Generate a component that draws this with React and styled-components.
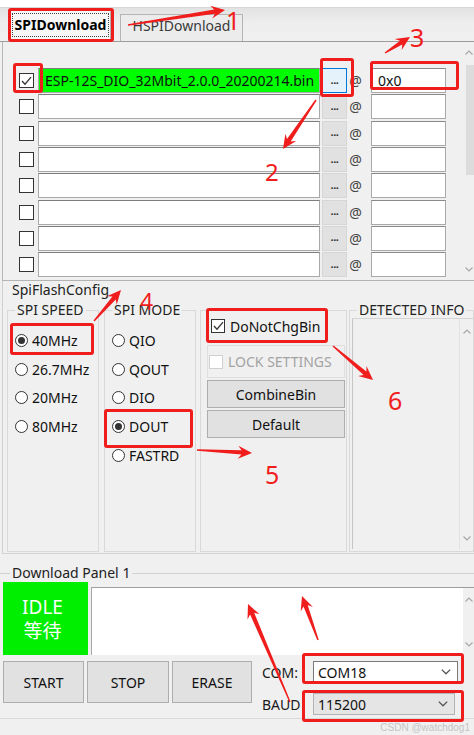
import React from 'react';
import styled, { createGlobalStyle, css } from 'styled-components';

const GlobalStyle = createGlobalStyle`
  html, body { margin: 0; padding: 0; background: #f0f0f0; }
  body { font-family: "Noto Sans", "Noto Sans CJK SC", sans-serif; }
  * { box-sizing: border-box; }
`;

const RED = '#f01d1d';

const Window = styled.div`
  position: relative;
  width: 474px;
  height: 735px;
  overflow: hidden;
  background: #f0f0f0;
  display: flex;
  flex-direction: column;
  color: #1a1a1a;
  font-size: 14px;
`;

const TopStrip = styled.div`
  flex: none;
  height: 8px;
  background: #ffffff;
  border-bottom: 1px solid #d6d6d6;
`;

const TabBar = styled.div`
  flex: none;
  height: 34px;
  display: flex;
  align-items: flex-end;
  gap: 9px;
  padding-left: 10px;
  background: linear-gradient(#e2e2e2, #eeeeee 45%, #f0f0f0);
  border-bottom: 1px solid #9c9c9c;
`;

const Tab = styled.div`
  display: flex;
  align-items: center;
  justify-content: center;
  border: 1px solid #b4b4b4;
  border-bottom: none;
  font-size: 14px;
  ${(p) =>
    p.$active
      ? css`
          width: 101px;
          height: 31px;
          padding-bottom: 3px;
          background: #f7f7f7;
          font-weight: 700;
          color: #000;
        `
      : css`
          width: 123px;
          height: 27px;
          padding-bottom: 5px;
          background: #ececec;
          color: #3a3a3a;
        `}
`;

const FocusText = styled.span`
  padding: 1px 2px;
  border: 1px dotted #444;
  line-height: 20px;
`;

const FilePanel = styled.div`
  flex: none;
  height: 239px;
  margin-left: 2px;
  border-left: 1px solid #b8b8b8;
  border-bottom: 1px solid #b4b4b4;
  display: flex;
`;

const FileList = styled.div`
  flex: 1;
  padding-top: 25.5px;
  display: flex;
  flex-direction: column;
`;

const FileRow = styled.div`
  height: 26.3px;
  display: flex;
  align-items: center;
  padding-left: 16px;
`;

const CheckBox = styled.span`
  flex: none;
  width: ${(p) => p.$size || 15}px;
  height: ${(p) => p.$size || 15}px;
  border: 1px solid ${(p) => (p.$disabled ? '#cfcfcf' : '#333')};
  background: #fff;
  display: flex;
  align-items: center;
  justify-content: center;
`;

const FileInput = styled.div`
  flex: none;
  width: 282px;
  height: 25px;
  margin-left: 4px;
  border: 1px solid #a9a9a9;
  border-top-color: #7d7d7d;
  background: ${(p) => (p.$active ? '#00ff00' : '#ffffff')};
  padding-left: 6px;
  font-size: 14px;
  line-height: 23px;
  color: #111;
  white-space: nowrap;
  overflow: hidden;
`;

const BrowseButton = styled.div`
  flex: none;
  width: 25px;
  height: 25px;
  margin-left: 2px;
  display: flex;
  align-items: center;
  justify-content: center;
  font-size: 11px;
  font-weight: 700;
  letter-spacing: -0.5px;
  color: #333;
  background: ${(p) => (p.$focused ? '#e5f1fb' : '#e1e1e1')};
  border: 1px solid ${(p) => (p.$focused ? '#0078d7' : '#d6d6d6')};
  padding-bottom: 3px;
`;

const AtSign = styled.span`
  flex: none;
  width: 13px;
  margin-left: 2px;
  font-size: 14px;
  color: #444;
  text-align: center;
`;

const AddrInput = styled.div`
  flex: none;
  width: 75px;
  height: 25px;
  margin-left: 9px;
  border: 1px solid #a9a9a9;
  border-top-color: #8a8a8a;
  background: #fff;
  padding-left: 6px;
  font-size: 14px;
  line-height: 23px;
  color: #111;
`;

const ScrollBar = styled.div`
  flex: none;
  width: 11px;
  display: flex;
  flex-direction: column;
  align-items: stretch;
`;

const ScrollArrow = styled.div`
  flex: none;
  height: ${(p) => p.$h || 20}px;
  display: flex;
  align-items: center;
  justify-content: center;
`;

const ScrollThumb = styled.div`
  flex: none;
  width: 8px;
  height: 110px;
  margin: 3px 0 0 3px;
  background: #dcdcdc;
`;

const Spacer = styled.div`
  flex: 1;
`;

const ConfigSection = styled.div`
  flex: none;
  height: 273px;
  margin-left: 2px;
  border-left: 1px solid #d0d0d0;
  border-bottom: 1px solid #d2d2d2;
  display: flex;
  flex-direction: column;
`;

const SectionTitle = styled.div`
  height: 19px;
  padding-left: 9px;
  font-size: 14px;
  line-height: 17px;
  color: #222;
`;

const GroupRow = styled.div`
  height: 252px;
  display: flex;
  padding-left: 4px;
`;

const Group = styled.fieldset`
  flex: none;
  margin: ${(p) => (p.$untitled ? '10px 0 0 0' : '0')};
  margin-left: ${(p) => p.$ml || 0}px;
  width: ${(p) => (p.$w ? `${p.$w}px` : 'auto')};
  ${(p) => !p.$w && 'flex: 1;'}
  min-width: 0;
  height: ${(p) => (p.$untitled ? 242 : 252)}px;
  padding: ${(p) => p.$pt || 0}px ${(p) => p.$pr || 0}px 0 ${(p) => p.$pl || 7}px;
  border: 1px solid #d9d9d9;
  display: flex;
  flex-direction: column;
`;

const Legend = styled.legend`
  margin-left: ${(p) => p.$ml || 0}px;
  padding: 0 2px;
  font-size: 14px;
  line-height: ${(p) => p.$lh || 20}px;
  color: #222;
`;

const RadioRow = styled.div`
  flex: none;
  height: 28.7px;
  display: flex;
  align-items: center;
  gap: 4px;
  font-size: 14px;
  color: #111;
`;

const RadioDot = styled.span`
  flex: none;
  width: 13px;
  height: 13px;
  border-radius: 50%;
  border: 1px solid #333;
  background: #fff;
  display: flex;
  align-items: center;
  justify-content: center;
  &::after {
    content: '';
    width: 7px;
    height: 7px;
    border-radius: 50%;
    background: ${(p) => (p.$checked ? '#333' : 'transparent')};
  }
`;

const CheckRow = styled.div`
  flex: none;
  height: 20px;
  display: flex;
  align-items: center;
  gap: 5px;
  margin-left: ${(p) => p.$ml || 0}px;
  font-size: 14px;
  color: ${(p) => (p.$disabled ? '#a3a3a3' : '#111')};
`;

const LockFrame = styled.div`
  flex: none;
  height: 33px;
  margin-top: 9px;
  border: 1px solid #dedede;
  display: flex;
  align-items: center;
  padding-left: 1px;
`;

const PushButton = styled.div`
  flex: none;
  height: ${(p) => p.$h || 28}px;
  width: ${(p) => (p.$w ? `${p.$w}px` : 'auto')};
  margin-top: ${(p) => p.$mt || 0}px;
  display: flex;
  align-items: center;
  justify-content: center;
  background: #e1e1e1;
  border: 1px solid #adadad;
  font-size: 14px;
  color: #111;
`;

const InfoBox = styled.div`
  height: 231px;
  margin-top: -2px;
  display: flex;
  border-top: 1px solid #d4d4d4;
`;

const InfoText = styled.div`
  flex: 1;
  border-left: 1px solid #c6c6c6;
  border-right: 1px solid #e2e2e2;
  background: #f0f0f0;
`;

const InfoScroll = styled.div`
  flex: none;
  width: 13px;
  display: flex;
  flex-direction: column;
`;

const DownloadPanel = styled.fieldset`
  flex: none;
  margin: 9px 0 0 0;
  padding: 0;
  border: none;
  border-top: 1px solid #d2d2d2;
  min-width: 0;
  display: flex;
  flex-direction: column;
`;

const StatusRow = styled.div`
  height: 73px;
  margin-top: -1px;
  display: flex;
  align-items: flex-start;
`;

const IdleBox = styled.div`
  flex: none;
  width: 85px;
  height: 73px;
  margin-left: 3px;
  background: #00ee00;
  color: #ffffff;
  display: flex;
  flex-direction: column;
  align-items: center;
  justify-content: center;
  font-size: 19px;
  line-height: 25px;
  padding-right: 6px;
`;

const IdleLine = styled.span`
  display: block;
  height: 24px;
  line-height: 24px;
`;

const LogArea = styled.div`
  flex: 1;
  height: 68px;
  margin: 5px 0 0 3px;
  display: flex;
  background: #ffffff;
  border-top: 1px solid #9e9e9e;
  border-left: 1px solid #a8a8a8;
`;

const LogScroll = styled.div`
  flex: none;
  width: 11px;
  margin-left: auto;
  background: #f0f0f0;
  display: flex;
  flex-direction: column;
  justify-content: space-between;
`;

const ControlRow = styled.div`
  height: 57px;
  margin-top: 6px;
  display: flex;
  align-items: flex-start;
  padding-left: 3px;
  gap: 3px;
`;

const PortGrid = styled.div`
  margin-left: 7px;
  display: grid;
  grid-template-columns: 51px auto;
  grid-template-rows: 22px 22px;
  row-gap: 10px;
  align-items: center;
`;

const PortLabel = styled.span`
  font-size: 14px;
  color: #1a1a1a;
`;

const Select = styled.div`
  width: ${(p) => p.$w}px;
  height: ${(p) => p.$h || 22}px;
  display: flex;
  align-items: center;
  justify-content: space-between;
  padding: 0 6px 0 4px;
  font-size: 14px;
  color: #111;
  background: ${(p) => (p.$gray ? '#e5e5e5' : '#ffffff')};
  border: 1px solid ${(p) => (p.$gray ? '#b4b4b4' : '#7a7a7a')};
`;

const Footer = styled.div`
  flex: 1;
  border-top: 1px solid #d9d9d9;
  display: flex;
  justify-content: flex-end;
  align-items: center;
  padding-right: 4px;
  font-size: 10px;
  color: #c4c4c4;
  font-family: "Liberation Sans", sans-serif;
`;

/* ----- annotation overlay (drawn over the UI) ----- */

const Overlay = styled.div`
  position: absolute;
  inset: 0;
  pointer-events: none;
`;

const RedBox = styled.div`
  position: absolute;
  left: ${(p) => p.$x}px;
  top: ${(p) => p.$y}px;
  width: ${(p) => p.$w}px;
  height: ${(p) => p.$h}px;
  border: 3px solid ${RED};
  border-radius: 3px;
`;

const RedNum = styled.span`
  position: absolute;
  left: ${(p) => p.$x}px;
  top: ${(p) => p.$y}px;
  font-size: ${(p) => p.$s || 25}px;
  line-height: 1;
  color: ${RED};
  font-family: "Noto Sans", sans-serif;
`;

const ArrowLayer = styled.svg`
  position: absolute;
  left: 0;
  top: 0;
`;

function arrowPoints([x1, y1, x2, y2], head = 14, hw = 6.5, sw = 2.2, tw = 0.7) {
  const dx = x2 - x1;
  const dy = y2 - y1;
  const L = Math.hypot(dx, dy);
  const ux = dx / L;
  const uy = dy / L;
  const nx = -uy;
  const ny = ux;
  const bx = x2 - ux * head;
  const by = y2 - uy * head;
  const nbx = x2 - ux * (head * 0.75);
  const nby = y2 - uy * (head * 0.75);
  const pts = [
    [x1 + nx * tw, y1 + ny * tw],
    [nbx + nx * sw, nby + ny * sw],
    [bx + nx * hw, by + ny * hw],
    [x2, y2],
    [bx - nx * hw, by - ny * hw],
    [nbx - nx * sw, nby - ny * sw],
    [x1 - nx * tw, y1 - ny * tw],
  ];
  return pts.map((p) => p.map((v) => v.toFixed(1)).join(',')).join(' ');
}

const arrows = [
  [128, 25, 225, 10],
  [385, 53, 410, 37],
  [316, 100, 283, 149],
  [94, 321, 121, 290],
  [197, 450, 252, 453],
  [333, 346, 373, 380],
  [290, 702, 248, 604],
  [318, 640, 302, 596],
];

const boxes = [
  { x: 8, y: 8, w: 106, h: 34 },
  { x: 13, y: 63, w: 30, h: 30 },
  { x: 320, y: 58, w: 34, h: 39 },
  { x: 370, y: 61, w: 89, h: 29 },
  { x: 10, y: 323, w: 84, h: 32 },
  { x: 104, y: 409, w: 89, h: 39 },
  { x: 206, y: 308, w: 122, h: 35 },
  { x: 302, y: 653, w: 162, h: 31 },
  { x: 302, y: 690, w: 162, h: 32 },
];

const nums = [
  { t: '1', x: 226, y: 8 },
  { t: '2', x: 265, y: 160, s: 24 },
  { t: '3', x: 410, y: 25 },
  { t: '4', x: 140, y: 290, s: 23 },
  { t: '5', x: 265, y: 462 },
  { t: '6', x: 388, y: 388 },
];

function Annotations() {
  return (
    <Overlay>
      {boxes.map((b, i) => (
        <RedBox key={i} $x={b.x} $y={b.y} $w={b.w} $h={b.h} />
      ))}
      <ArrowLayer width="474" height="735" viewBox="0 0 474 735">
        {arrows.map((a, i) => (
          <polygon key={i} points={arrowPoints(a)} fill={RED} />
        ))}
      </ArrowLayer>
      {nums.map((n) => (
        <RedNum key={n.t} $x={n.x} $y={n.y} $s={n.s}>
          {n.t}
        </RedNum>
      ))}
    </Overlay>
  );
}

/* ----- small drawings ----- */

const Chevron = ({ up, w = 8, h = 5, color = '#a6a6a6' }) => (
  <svg width={w} height={h} viewBox="0 0 8 5">
    <polyline
      points={up ? '0.5,4.5 4,1 7.5,4.5' : '0.5,0.5 4,4 7.5,0.5'}
      fill="none"
      stroke={color}
      strokeWidth="1.1"
    />
  </svg>
);

const Tick = () => (
  <svg width="11" height="10" viewBox="0 0 11 10">
    <polyline points="1,5 4,8.2 10,1.2" fill="none" stroke="#333" strokeWidth="1.3" />
  </svg>
);

const files = [
  { checked: true, name: 'ESP-12S_DIO_32Mbit_2.0.0_20200214.bin', addr: '0x0' },
  ...Array.from({ length: 7 }, () => ({ checked: false, name: '', addr: '' })),
];

const speeds = [
  { label: '40MHz', checked: true },
  { label: '26.7MHz' },
  { label: '20MHz' },
  { label: '80MHz' },
];

const modes = [
  { label: 'QIO' },
  { label: 'QOUT' },
  { label: 'DIO' },
  { label: 'DOUT', checked: true },
  { label: 'FASTRD' },
];

export default function App() {
  return (
    <>
      <GlobalStyle />
      <Window>
        <TopStrip />
        <TabBar>
          <Tab $active>
            <FocusText>SPIDownload</FocusText>
          </Tab>
          <Tab>HSPIDownload</Tab>
        </TabBar>

        <FilePanel>
          <FileList>
            {files.map((f, i) => (
              <FileRow key={i}>
                <CheckBox>{f.checked && <Tick />}</CheckBox>
                <FileInput $active={i === 0}>{f.name}</FileInput>
                <BrowseButton $focused={i === 0}>...</BrowseButton>
                <AtSign>@</AtSign>
                <AddrInput>{f.addr}</AddrInput>
              </FileRow>
            ))}
          </FileList>
          <ScrollBar>
            <ScrollArrow $h={20}>
              <Chevron up />
            </ScrollArrow>
            <ScrollThumb />
            <Spacer />
            <ScrollArrow $h={22}>
              <Chevron />
            </ScrollArrow>
          </ScrollBar>
        </FilePanel>

        <ConfigSection>
          <SectionTitle>SpiFlashConfig</SectionTitle>
          <GroupRow>
            <Group $w={92} $pl={7} $pt={6}>
              <Legend>SPI SPEED</Legend>
              {speeds.map((s) => (
                <RadioRow key={s.label}>
                  <RadioDot $checked={s.checked} />
                  {s.label}
                </RadioRow>
              ))}
            </Group>
            <Group $w={92} $ml={5} $pl={7} $pt={6}>
              <Legend>SPI MODE</Legend>
              {modes.map((s) => (
                <RadioRow key={s.label}>
                  <RadioDot $checked={s.checked} />
                  {s.label}
                </RadioRow>
              ))}
            </Group>
            <Group $untitled $w={147} $ml={4} $pl={6} $pr={1} $pt={5}>
              <CheckRow $ml={4}>
                <CheckBox $size={14}>
                  <Tick />
                </CheckBox>
                DoNotChgBin
              </CheckRow>
              <LockFrame>
                <CheckRow $disabled>
                  <CheckBox $size={14} $disabled />
                  LOCK SETTINGS
                </CheckRow>
              </LockFrame>
              <PushButton $mt={2}>CombineBin</PushButton>
              <PushButton $mt={2}>Default</PushButton>
            </Group>
            <Group $ml={2} $pl={2}>
              <Legend $ml={5} $lh={20}>
                DETECTED INFO
              </Legend>
              <InfoBox>
                <InfoText />
                <InfoScroll>
                  <ScrollArrow $h={24}>
                    <Chevron up />
                  </ScrollArrow>
                  <Spacer />
                  <ScrollArrow $h={22}>
                    <Chevron />
                  </ScrollArrow>
                </InfoScroll>
              </InfoBox>
            </Group>
          </GroupRow>
        </ConfigSection>

        <DownloadPanel>
          <Legend $ml={10}>Download Panel 1</Legend>
          <StatusRow>
            <IdleBox>
              <IdleLine>IDLE</IdleLine>
              <IdleLine>等待</IdleLine>
            </IdleBox>
            <LogArea>
              <LogScroll>
                <ScrollArrow $h={22}>
                  <Chevron up />
                </ScrollArrow>
                <ScrollArrow $h={22}>
                  <Chevron />
                </ScrollArrow>
              </LogScroll>
            </LogArea>
          </StatusRow>
          <ControlRow>
            <PushButton $w={81} $h={42}>START</PushButton>
            <PushButton $w={82} $h={42}>STOP</PushButton>
            <PushButton $w={80} $h={42}>ERASE</PushButton>
            <PortGrid>
              <PortLabel>COM:</PortLabel>
              <Select $w={145}>
                COM18
                <Chevron w={10} h={6} color="#555" />
              </Select>
              <PortLabel>BAUD</PortLabel>
              <Select $w={142} $gray>
                115200
                <Chevron w={10} h={6} color="#555" />
              </Select>
            </PortGrid>
          </ControlRow>
        </DownloadPanel>
        <Footer>CSDN @watchdog1</Footer>

        <Annotations />
      </Window>
    </>
  );
}
